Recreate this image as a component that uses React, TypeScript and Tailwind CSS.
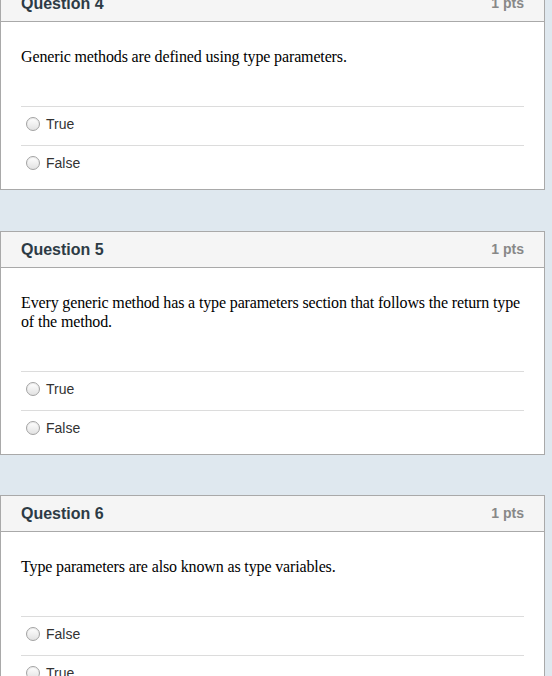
import React from 'react';

interface Question {
  num: number;
  text: string;
  answers: string[];
}

const QUESTIONS: Question[] = [
  { num: 4, text: 'Generic methods are defined using type parameters.', answers: ['True', 'False'] },
  {
    num: 5,
    text: 'Every generic method has a type parameters section that follows the return type of the method.',
    answers: ['True', 'False'],
  },
  { num: 6, text: 'Type parameters are also known as type variables.', answers: ['False', 'True'] },
];

function Radio() {
  return (
    <span className="inline-block w-[14px] h-[14px] rounded-full border border-[#a3a3a3] bg-gradient-to-b from-white to-[#e2e2e2] shadow-[inset_0_1px_1px_rgba(0,0,0,0.08)]" />
  );
}

function QuestionCard({ q, className }: { q: Question; className?: string }) {
  return (
    <div className={`w-[545px] bg-white border border-[#a9a9a9] font-['Liberation_Sans',Arial,sans-serif] ${className ?? ''}`}>
      {/* Header */}
      <div className="h-[36px] bg-[#f5f5f5] border-b border-[#a9a9a9] px-5 flex items-center justify-between">
        <span className="text-[16px] font-bold text-[#2d3b45]">Question {q.num}</span>
        <span className="text-[14px] font-bold text-[#888]">1 pts</span>
      </div>
      {/* Body */}
      <div className="px-5 pt-[25px] pb-[5px]">
        <p className="font-['Liberation_Serif','Times_New_Roman',serif] text-[16px] leading-[19px] tracking-[-0.14px] text-black mb-[40px]">
          {q.text}
        </p>
        {q.answers.map((a) => (
          <div key={a} className="border-t border-[#dcdcdc] h-[39px] flex items-center pb-[4px] pl-[5px] gap-[6px]">
            <Radio />
            <span className="text-[14px] text-[#333]">{a}</span>
          </div>
        ))}
      </div>
    </div>
  );
}

export default function App() {
  return (
    <div className="bg-[#dfe8ef] h-[676px] overflow-hidden">
      <div className="-mt-[15px] flex flex-col">
        <QuestionCard q={QUESTIONS[0]} />
        <QuestionCard q={QUESTIONS[1]} className="mt-[41px]" />
        <QuestionCard q={QUESTIONS[2]} className="mt-[40px]" />
      </div>
    </div>
  );
}
